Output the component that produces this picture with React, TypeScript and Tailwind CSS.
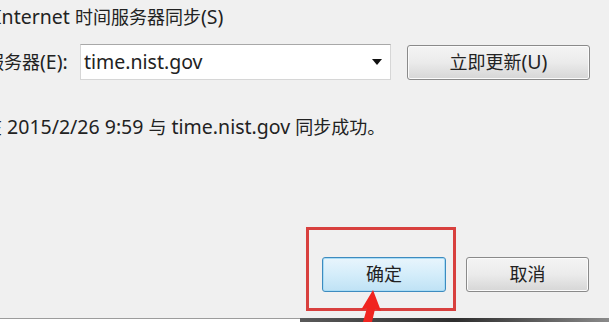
const FONT = "font-['Noto_Sans','Noto_Sans_CJK_SC',sans-serif]"

// Latin runs are rendered a touch larger so their width matches the CJK-font metrics of the screenshot
function L({ children }: { children: React.ReactNode }) {
  return <span className="text-[19.5px]">{children}</span>
}

function DialogButton({ label, primary }: { label: string; primary?: boolean }) {
  return (
    <button
      className={
        primary
          ? "flex items-center justify-center h-[35px] w-[124px] rounded-[3px] border border-[#3d8bbf] bg-gradient-to-b from-[#e8f5fc] via-[#d4edfa] to-[#bfe2f5] shadow-[inset_0_0_0_1px_#a9dcf5] text-[18px] text-[#222]"
          : "flex items-center justify-center h-[35px] w-[123px] rounded-[3px] border border-[#8a8a8a] bg-gradient-to-b from-[#f4f4f4] via-[#ebebeb] to-[#d6d6d6] shadow-[inset_0_0_0_1px_#fbfbfb] text-[18px] text-[#222]"
      }
    >
      {label}
    </button>
  )
}

export default function App() {
  return (
    <div className={`relative flex h-[322px] w-[609px] flex-col overflow-hidden bg-[#f0f0f0] ${FONT} text-[#222]`}>
      {/* Section title */}
      <div className="-ml-[5px] pt-[5px] text-[18px] leading-[24px] whitespace-nowrap">
        <L>Internet </L>时间服务器同步<L>(S)</L>
      </div>

      {/* Server row */}
      <div className="mt-[15px] flex items-center">
        <span className="-ml-[14px] w-[94px] text-[18px] leading-[24px] whitespace-nowrap">
          服务器<L>(E):</L>
        </span>
        <div className="flex h-[36px] w-[311px] items-center justify-between border border-[#d6d6d6] border-t-[#a8a8a8] bg-white pl-[3px] pr-[8px]">
          <span className="text-[19.5px] leading-[24px]">time.nist.gov</span>
          <svg width="10" height="6" viewBox="0 0 10 6" aria-hidden>
            <path d="M0 0h10L5 6z" fill="#111" />
          </svg>
        </div>
        <button className="ml-[16px] flex h-[35px] w-[183px] items-center justify-center rounded-[3px] border border-[#8a8a8a] bg-gradient-to-b from-[#f4f4f4] via-[#ebebeb] to-[#d6d6d6] shadow-[inset_0_0_0_1px_#fbfbfb] text-[18px] text-[#222]">
          立即更新<L>(U)</L>
        </button>
      </div>

      {/* Status */}
      <div className="-ml-[16px] mt-[35px] text-[18px] leading-[24px] whitespace-nowrap">
        在<L> 2015/2/26 9:59 </L>与<L> time.nist.gov </L>同步成功。
      </div>

      <div className="flex-1" />

      {/* Dialog buttons */}
      <div className="flex justify-end gap-[20px] pr-[20px]">
        <DialogButton label="确定" primary />
        <DialogButton label="取消" />
      </div>

      {/* Bottom edge */}
      <div className="mt-[26px] flex h-[4px]">
        <div className="w-[300px] border-t border-[#9c9c9c] bg-white" />
        <div className="flex-1 bg-gradient-to-r from-[#5a5a5a] via-[#2e2e2e] to-[#8a8a8a]" />
      </div>

      {/* Annotation: red box + arrow */}
      <div className="pointer-events-none absolute left-[306px] top-[227px] h-[84px] w-[150px] border-[3px] border-[#d8403e]" />
      <svg className="pointer-events-none absolute left-0 top-0" width="609" height="322" aria-hidden>
        <polygon
          points="373,290 381,311 375,309 372,322 363,322 367,308 361,310"
          fill="#f0241f"
        />
      </svg>
    </div>
  )
}
